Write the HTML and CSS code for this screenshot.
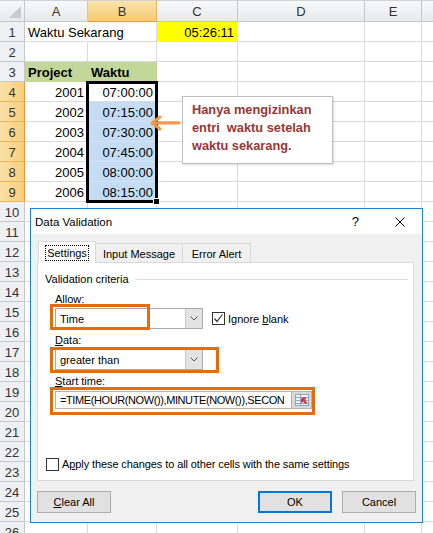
FILE: index.html
```html
<!DOCTYPE html>
<html>
<head>
<meta charset="utf-8">
<title>Data Validation</title>
<link rel="stylesheet" href="styles.css">
</head>
<body>
<div class="page">
  <div class="sheet">
    <div class="c h corner"></div><div class="c h">A</div><div class="c h hs">B</div><div class="c h">C</div><div class="c h">D</div><div class="c h">E</div><div class="c h"></div>

    <div class="c rh">1</div><div class="c noright">Waktu Sekarang</div><div class="c"></div><div class="c r yellow">05:26:11</div><div class="c"></div><div class="c"></div><div class="c"></div>
    <div class="c rh">2</div><div class="c"></div><div class="c"></div><div class="c"></div><div class="c"></div><div class="c"></div><div class="c"></div>
    <div class="c rh">3</div><div class="c b green">Project</div><div class="c b green">Waktu</div><div class="c"></div><div class="c"></div><div class="c"></div><div class="c"></div>
    <div class="c rh rs">4</div><div class="c r">2001</div><div class="c r">07:00:00</div><div class="c"></div><div class="c"></div><div class="c"></div><div class="c"></div>
    <div class="c rh rs">5</div><div class="c r">2002</div><div class="c r sel">07:15:00</div><div class="c"></div><div class="c"></div><div class="c"></div><div class="c"></div>
    <div class="c rh rs">6</div><div class="c r">2003</div><div class="c r sel">07:30:00</div><div class="c"></div><div class="c"></div><div class="c"></div><div class="c"></div>
    <div class="c rh rs">7</div><div class="c r">2004</div><div class="c r sel">07:45:00</div><div class="c"></div><div class="c"></div><div class="c"></div><div class="c"></div>
    <div class="c rh rs">8</div><div class="c r">2005</div><div class="c r sel">08:00:00</div><div class="c"></div><div class="c"></div><div class="c"></div><div class="c"></div>
    <div class="c rh rs">9</div><div class="c r">2006</div><div class="c r sel">08:15:00</div><div class="c"></div><div class="c"></div><div class="c"></div><div class="c"></div>
    <div class="c rh">10</div><div class="c"></div><div class="c"></div><div class="c"></div><div class="c"></div><div class="c"></div><div class="c"></div>
    <div class="c rh">11</div><div class="c"></div><div class="c"></div><div class="c"></div><div class="c"></div><div class="c"></div><div class="c"></div>
    <div class="c rh">12</div><div class="c"></div><div class="c"></div><div class="c"></div><div class="c"></div><div class="c"></div><div class="c"></div>
    <div class="c rh">13</div><div class="c"></div><div class="c"></div><div class="c"></div><div class="c"></div><div class="c"></div><div class="c"></div>
    <div class="c rh">14</div><div class="c"></div><div class="c"></div><div class="c"></div><div class="c"></div><div class="c"></div><div class="c"></div>
    <div class="c rh">15</div><div class="c"></div><div class="c"></div><div class="c"></div><div class="c"></div><div class="c"></div><div class="c"></div>
    <div class="c rh">16</div><div class="c"></div><div class="c"></div><div class="c"></div><div class="c"></div><div class="c"></div><div class="c"></div>
    <div class="c rh">17</div><div class="c"></div><div class="c"></div><div class="c"></div><div class="c"></div><div class="c"></div><div class="c"></div>
    <div class="c rh">18</div><div class="c"></div><div class="c"></div><div class="c"></div><div class="c"></div><div class="c"></div><div class="c"></div>
    <div class="c rh">19</div><div class="c"></div><div class="c"></div><div class="c"></div><div class="c"></div><div class="c"></div><div class="c"></div>
    <div class="c rh">20</div><div class="c"></div><div class="c"></div><div class="c"></div><div class="c"></div><div class="c"></div><div class="c"></div>
    <div class="c rh">21</div><div class="c"></div><div class="c"></div><div class="c"></div><div class="c"></div><div class="c"></div><div class="c"></div>
    <div class="c rh">22</div><div class="c"></div><div class="c"></div><div class="c"></div><div class="c"></div><div class="c"></div><div class="c"></div>
    <div class="c rh">23</div><div class="c"></div><div class="c"></div><div class="c"></div><div class="c"></div><div class="c"></div><div class="c"></div>
    <div class="c rh">24</div><div class="c"></div><div class="c"></div><div class="c"></div><div class="c"></div><div class="c"></div><div class="c"></div>
    <div class="c rh">25</div><div class="c"></div><div class="c"></div><div class="c"></div><div class="c"></div><div class="c"></div><div class="c"></div>
    <div class="c rh">26</div><div class="c"></div><div class="c"></div><div class="c"></div><div class="c"></div><div class="c"></div><div class="c"></div>
  </div>

  <div class="selection"><span class="handle"></span></div>

  <div class="callout">Hanya mengizinkan<br>entri&nbsp; waktu setelah<br>waktu sekarang.</div>
  <svg class="arrow" width="34" height="20" viewBox="0 0 34 20">
    <path d="M5 10H31" stroke="#f79646" stroke-width="3" stroke-linecap="round"/>
    <path d="M12 4L4 10L12 16" fill="none" stroke="#f79646" stroke-width="3" stroke-linecap="round" stroke-linejoin="round"/>
  </svg>

  <div class="dlg">
    <div class="titlebar">
      <span class="title">Data Validation</span>
      <span class="help">?</span>
      <svg class="close" width="10" height="10" viewBox="0 0 10 10"><path d="M0.5 0.5L9.5 9.5M9.5 0.5L0.5 9.5" stroke="#000" stroke-width="1"/></svg>
    </div>
    <div class="dbody">
      <div class="tabs">
        <div class="tab active"><span class="focus">Settings</span></div>
        <div class="tab">Input Message</div>
        <div class="tab">Error Alert</div>
      </div>
      <div class="panel">
        <div class="group"><span>Validation criteria</span><span class="rule"></span></div>
        <div class="fields">
          <div class="lbl"><u>A</u>llow:</div>
          <div class="line">
            <div class="select"><span class="val">Time</span><span class="dd"><svg width="8" height="5" viewBox="0 0 8 5"><path d="M0.5 0.5L4 4L7.5 0.5" fill="none" stroke="#555" stroke-width="1"/></svg></span></div>
            <div class="chk"><span class="box"><svg width="11" height="11" viewBox="0 0 11 11"><path d="M1.5 5.5L4 8.5L9.5 1.5" fill="none" stroke="#333" stroke-width="1.2"/></svg></span><span>Ignore <u>b</u>lank</span></div>
          </div>
          <div class="lbl"><u>D</u>ata:</div>
          <div class="select"><span class="val">greater than</span><span class="dd"><svg width="8" height="5" viewBox="0 0 8 5"><path d="M0.5 0.5L4 4L7.5 0.5" fill="none" stroke="#555" stroke-width="1"/></svg></span></div>
          <div class="lbl lbl3"><u>S</u>tart time:</div>
          <div class="input">
            <span class="txt">=TIME(HOUR(NOW()),MINUTE(NOW()),SECON</span>
            <span class="rng"><svg width="16" height="14" viewBox="0 0 16 14"><rect x="1.5" y="1.5" width="13" height="11" fill="#f3f6fa" stroke="#8ea5c4"/><path d="M2 4.5H14M2 7.5H14M2 10.5H14M6.5 2V12" stroke="#86a8d8"/><path d="M8 5.5L12.5 10.5M8 5.5V9.5M8 5.5H12" stroke="#e0302c" stroke-width="2"/></svg></span>
          </div>
        </div>
        <div class="apply"><span class="box"></span><span>A<u>p</u>ply these changes to all other cells with the same settings</span></div>
      </div>
      <div class="footer">
        <button class="btn"><u>C</u>lear All</button>
        <span class="spacer"></span>
        <button class="btn ok">OK</button>
        <button class="btn">Cancel</button>
      </div>
    </div>
  </div>

  <div class="mark mark-allow"></div>
  <div class="mark mark-data"></div>
  <div class="mark mark-start"></div>
</div>
</body>
</html>
```

FILE: styles.css
```css
html, body {
  margin: 0;
  padding: 0;
  background: #fff;
}
body {
  width: 433px;
  height: 533px;
  overflow: hidden;
}
.page {
  position: relative;
  width: 433px;
  height: 533px;
  overflow: hidden;
}

/* ---------- spreadsheet ---------- */
.sheet {
  display: grid;
  grid-template-columns: 25px 63px 69px 81px 127px 57px 30px;
  grid-template-rows: 22px;
  grid-auto-rows: 20px;
  font-family: "Liberation Sans", Arial, sans-serif;
  font-size: 13px;
  color: #000;
}
.c {
  box-sizing: border-box;
  border-right: 1px solid #dadada;
  border-bottom: 1px solid #dadada;
  display: flex;
  align-items: center;
  padding: 1px 3px 0;
  white-space: nowrap;
}
.c.noright { border-right-color: transparent; }
.c.r { justify-content: flex-end; }
.c.b { font-weight: bold; }
.h {
  justify-content: center;
  background: linear-gradient(#f8f9fa, #e7e9ec);
  border-color: #c4c7cc;
  border-top: 1px solid #d3d3d3;
  color: #333;
  padding: 0;
}
.h.hs {
  background: linear-gradient(#fbe3ac, #f6cb72);
  border-right-color: #e8b55c;
  border-bottom-color: #f29436;
}
.corner { position: relative; }
.corner::after {
  content: "";
  position: absolute;
  right: 3px;
  bottom: 3px;
  width: 12px;
  height: 12px;
  background: #c9cbce;
  clip-path: polygon(100% 0, 100% 100%, 0 100%);
}
.rh {
  justify-content: center;
  background: #eef0f3;
  border-color: #c4c7cc;
  color: #333;
  padding: 1px 0 0;
}
.rh.rs {
  background: linear-gradient(90deg, #fbe1a7, #f8cf7b);
  border-right-color: #f29436;
  border-bottom-color: #e8b55c;
}
.yellow { background: #ffff00; border-color: #ffff00; }
.green { background: #c4d79b; border-color: #c4d79b; }
.sel { background: #c5dcf5; border-bottom-color: #d4e3f4; }

.selection {
  position: absolute;
  left: 86px;
  top: 81px;
  width: 72px;
  height: 122px;
  box-sizing: border-box;
  border: 3px solid #000;
}
.handle {
  position: absolute;
  right: -5px;
  bottom: -5px;
  width: 5px;
  height: 5px;
  background: #000;
  border: 1px solid #fff;
}

/* ---------- callout ---------- */
.callout {
  position: absolute;
  left: 182px;
  top: 96px;
  width: 151px;
  height: 68px;
  box-sizing: border-box;
  border: 1px solid #bfbfbf;
  background: #fff;
  box-shadow: 1px 1px 2px rgba(0, 0, 0, 0.15);
  padding: 4px 0 0 9px;
  font-family: "Liberation Sans", Arial, sans-serif;
  font-weight: bold;
  font-size: 12.8px;
  line-height: 18px;
  color: #953735;
  white-space: nowrap;
}
.arrow {
  position: absolute;
  left: 148px;
  top: 113px;
}

/* ---------- dialog ---------- */
.dlg {
  position: absolute;
  left: 30px;
  top: 208px;
  width: 393px;
  height: 315px;
  box-sizing: border-box;
  border: 1px solid #1883d7;
  background: #f0f0f0;
  font-family: "Liberation Sans", Arial, sans-serif;
  font-size: 11px;
  color: #000;
  display: flex;
  flex-direction: column;
}
.titlebar {
  height: 25px;
  background: #fff;
  display: flex;
  align-items: center;
  flex: none;
}
.title {
  font-size: 11.5px;
  padding-left: 4px;
  flex: 1;
}
.help {
  font-size: 13px;
  margin-right: 36px;
}
.close { margin-right: 17px; }

.dbody {
  flex: 1;
  padding: 7px 8px 0 6px;
}
.tabs {
  display: flex;
  align-items: flex-end;
  height: 21px;
  margin-left: 1px;
  position: relative;
  z-index: 1;
}
.tab {
  box-sizing: border-box;
  height: 19px;
  border: 1px solid #d9d9d9;
  border-bottom: none;
  margin-left: -1px;
  display: flex;
  align-items: center;
  justify-content: center;
  background: #f0f0f0;
  padding-top: 1px;
}
.tab:first-child { margin-left: 0; width: 58px; }
.tab:nth-child(2) { width: 88px; }
.tab:nth-child(3) { width: 69px; }
.tab.active {
  height: 22px;
  margin-bottom: -1px;
  background: #fff;
  position: relative;
  z-index: 2;
  align-items: flex-start;
  padding-top: 3px;
}
.focus {
  border: 1px dotted #000;
  padding: 0 1px;
  line-height: 14px;
}
.panel {
  height: 219px;
  box-sizing: border-box;
  border: 1px solid #d9d9d9;
  background: #fff;
}
.group {
  display: flex;
  align-items: center;
  height: 16px;
  margin: 8px 5px 0 7px;
}
.rule {
  flex: 1;
  height: 1px;
  background: #dcdcdc;
  margin-left: 6px;
}
.fields { padding-left: 17px; }
.lbl {
  height: 16px;
  line-height: 16px;
  margin-top: 3px;
  margin-bottom: 1px;
}
.fields .lbl:first-child { margin-top: 4px; }
.lbl3 { margin-bottom: 2px; }
.line {
  display: flex;
  align-items: center;
}
.select {
  width: 148px;
  height: 21px;
  box-sizing: border-box;
  border: 1px solid #ababab;
  background: #fff;
  display: flex;
  align-items: center;
}
.select .val {
  flex: 1;
  padding-left: 4px;
}
.dd {
  width: 16px;
  height: 19px;
  background: #e3e3e3;
  border-left: 1px solid #c8c8c8;
  display: flex;
  align-items: center;
  justify-content: center;
}
.chk {
  display: flex;
  align-items: center;
  margin-left: 9px;
}
.box {
  width: 13px;
  height: 13px;
  box-sizing: border-box;
  border: 1px solid #333;
  background: #fff;
  display: inline-flex;
  align-items: center;
  justify-content: center;
  margin-right: 3px;
}
.input {
  width: 257px;
  height: 18px;
  box-sizing: border-box;
  border: 1px solid #b4b4b4;
  background: #fff;
  display: flex;
  align-items: center;
  overflow: hidden;
}
.input .txt {
  flex: 1;
  padding-left: 4px;
  letter-spacing: -0.4px;
  white-space: nowrap;
  overflow: hidden;
}
.rng {
  width: 19px;
  height: 16px;
  background: #d9d9d9;
  border-left: 1px solid #b0b0b0;
  display: flex;
  align-items: center;
  justify-content: center;
  flex: none;
}
.apply {
  display: flex;
  align-items: center;
  height: 16px;
  margin-top: 47px;
  padding-left: 8px;
  letter-spacing: -0.1px;
}
.apply .box { margin-right: 3px; }
.footer {
  display: flex;
  margin-top: 10px;
  margin-right: -2px;
}
.spacer { flex: 1; }
.btn {
  width: 74px;
  height: 22px;
  box-sizing: border-box;
  border: 1px solid #adadad;
  background: #e1e1e1;
  font-family: "Liberation Sans", Arial, sans-serif;
  font-size: 11px;
  color: #000;
  padding: 0;
  margin: 0;
}
.btn.ok {
  border: 2px solid #0078d7;
  margin-right: 10px;
}

/* ---------- annotation frames ---------- */
.mark {
  position: absolute;
  box-sizing: border-box;
  border: 3px solid #e46c0a;
}
.mark-allow { left: 50px; top: 304px; width: 100px; height: 26px; }
.mark-data { left: 50px; top: 347px; width: 169px; height: 26px; }
.mark-start { left: 50px; top: 387px; width: 265px; height: 28px; }
```
